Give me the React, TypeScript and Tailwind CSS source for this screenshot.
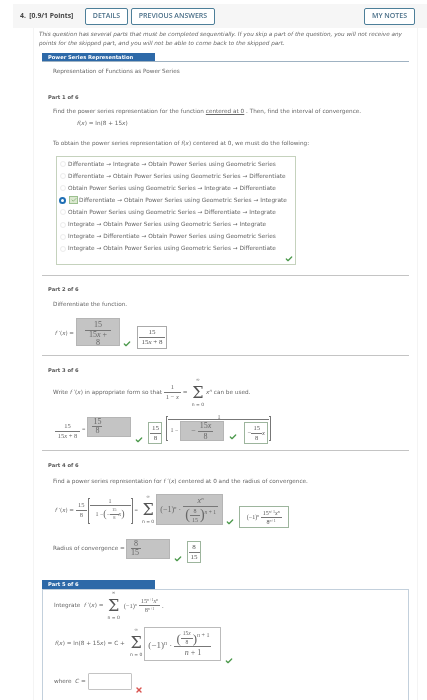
import React from 'react';
import { Check, X } from 'lucide-react';

const options = [
  'Differentiate → Integrate → Obtain Power Series using Geometric Series',
  'Differentiate → Obtain Power Series using Geometric Series → Differentiate',
  'Obtain Power Series using Geometric Series → Integrate → Differentiate',
  'Differentiate → Obtain Power Series using Geometric Series → Integrate',
  'Obtain Power Series using Geometric Series → Differentiate → Integrate',
  'Integrate → Obtain Power Series using Geometric Series → Integrate',
  'Integrate → Differentiate → Obtain Power Series using Geometric Series',
  'Integrate → Obtain Power Series using Geometric Series → Differentiate',
];

function Frac({ top, bottom, className = '' }: { top: React.ReactNode; bottom: React.ReactNode; className?: string }) {
  return (
    <span className={`inline-flex flex-col items-center leading-none ${className}`}>
      <span className="px-[2px] pb-[1px] whitespace-nowrap">{top}</span>
      <span className="self-stretch border-t border-[#777]" />
      <span className="px-[2px] pt-[1px] whitespace-nowrap">{bottom}</span>
    </span>
  );
}

function Sum() {
  return (
    <span className="inline-flex flex-col items-center leading-none text-[#555] mx-[2px]">
      <span className="text-[4.5px] h-[6px] leading-[6px]">∞</span>
      <span className="text-[16px] h-[19px] leading-[19px] font-['DejaVu_Serif',serif]">Σ</span>
      <span className="text-[4.5px] h-[6px] leading-[6px] font-['DejaVu_Sans',sans-serif]">n = 0</span>
    </span>
  );
}

function Tick({ className = '' }: { className?: string }) {
  return <Check className={`w-[8px] h-[8px] text-[#4d9a4d] shrink-0 ${className}`} strokeWidth={4} />;
}

function Answer({ children, className = '' }: { children: React.ReactNode; className?: string }) {
  return (
    <span className={`inline-flex items-center justify-center border border-[#9db59d] bg-white font-['Liberation_Serif',serif] text-[#555] ${className}`}>
      {children}
    </span>
  );
}

function Filled({ children, className = '' }: { children: React.ReactNode; className?: string }) {
  return (
    <span className={`flex bg-[#c4c4c4] border border-[#b5b5b5] font-['Liberation_Serif',serif] text-[#666] ${className}`}>
      {children}
    </span>
  );
}

function PartLabel({ children, className = '' }: { children: React.ReactNode; className?: string }) {
  return <div className={`pl-[6px] text-[5.2px] leading-[8px] font-bold text-[#555] ${className}`}>{children}</div>;
}

function Para({ children, className = '' }: { children: React.ReactNode; className?: string }) {
  return <div className={`pl-[11px] text-[5.72px] leading-[8px] text-[#666] whitespace-nowrap ${className}`}>{children}</div>;
}

function BracketEdge({ side }: { side: 'left' | 'right' }) {
  return <span className={`w-[2px] shrink-0 self-stretch border-y border-[#777] ${side === 'left' ? 'border-l' : 'border-r'}`} />;
}

export default function App() {
  return (
    <div className="w-[427px] h-[700px] overflow-hidden bg-white font-['DejaVu_Sans',sans-serif] blur-[0.35px]">
      {/* Question header */}
      <div className="pt-[4px]">
        <div className="ml-[13px] h-[24px] bg-[#f6f6f6] flex items-center pl-[7px] pr-[12px] font-['Open_Sans',sans-serif]">
          <span className="text-[6.8px] font-bold text-[#444] w-[65px] whitespace-nowrap">4.&nbsp; [0.9/1 Points]</span>
          <span className="h-[17px] w-[43px] flex items-center justify-center border border-[#4d7f99] rounded-[2px] bg-white text-[7px] font-semibold text-[#4a6f88]">DETAILS</span>
          <span className="ml-[3px] h-[17px] w-[84px] flex items-center justify-center border border-[#4d7f99] rounded-[2px] bg-white text-[7px] font-semibold text-[#4a6f88]">PREVIOUS ANSWERS</span>
          <span className="ml-auto h-[17px] w-[51px] flex items-center justify-center border border-[#4d7f99] rounded-[2px] bg-white text-[7px] font-semibold text-[#4a6f88]">MY NOTES</span>
        </div>
      </div>

      {/* Question body */}
      <div className="ml-[33px] mr-[9px] border-x border-[#f4f4f4] h-[672px]">
        <div className="pt-[2px] pl-[5px] text-[5.7px] leading-[9px] italic text-[#666] whitespace-nowrap">
          <div>This question has several parts that must be completed sequentially. If you skip a part of the question, you will not receive any</div>
          <div>points for the skipped part, and you will not be able to come back to the skipped part.</div>
        </div>

        <div className="ml-[8px] mr-[8px]">
          <div className="mt-[5px] border-b border-[#9fb2c2] h-[9px]">
            <div className="w-[113px] h-[8px] bg-[#2d69a8] pl-[6px] text-[5.2px] leading-[8px] font-bold text-white">Power Series Representation</div>
          </div>
          <Para className="mt-[5px]">Representation of Functions as Power Series</Para>

          <PartLabel className="mt-[18px]">Part 1 of 6</PartLabel>
          <Para className="mt-[6px]">
            Find the power series representation for the function <span className="underline">centered at 0</span> . Then, find the interval of convergence.
          </Para>
          <div className="pl-[35px] mt-[4px] text-[5.72px] leading-[8px] text-[#666]"><i>f</i>(<i>x</i>) = ln(8 + 15<i>x</i>)</div>
          <Para className="mt-[12px]">To obtain the power series representation of <i>f</i>(<i>x</i>) centered at 0, we must do the following:</Para>

          {/* Choice box */}
          <div className="ml-[14px] mt-[9px] w-[240px] h-[109px] border border-[#c5d2bd] pt-[1px] pl-[1px] relative">
            {options.map((o, i) => (
              <div key={o} className="h-[12.1px] flex items-center text-[5.8px] text-[#666] whitespace-nowrap">
                {i === 3 ? (
                  <>
                    <span className="w-[7px] h-[7px] rounded-full border-[2px] border-[#1f6fb5] bg-white mr-[3px] ml-[1px] shrink-0" />
                    <span className="w-[9px] h-[8px] mr-[1px] border border-[#9cc08f] bg-[#dbe8d0] flex items-center justify-center shrink-0">
                      <Check className="w-[6px] h-[6px] text-[#7fae6f]" strokeWidth={3} />
                    </span>
                  </>
                ) : (
                  <span className="w-[6px] h-[6px] rounded-full border border-[#ececec] bg-white mr-[2px] ml-[2px] shrink-0" />
                )}
                <span>{o}</span>
              </div>
            ))}
            <Tick className="absolute right-[2px] bottom-[1px]" />
          </div>

          <div className="mt-[10px] border-t border-[#c4c4c4]" />

          {/* Part 2 */}
          <PartLabel className="mt-[9px]">Part 2 of 6</PartLabel>
          <Para className="mt-[7px]">Differentiate the function.</Para>
          <div className="mt-[10px] h-[31px] pl-[13px] flex items-start text-[#666]">
            <span className="text-[5.55px] mt-[11px] w-[21px]"><i>f</i> ′(<i>x</i>) =</span>
            <Filled className="w-[44px] h-[28px] flex-col items-center text-[8px] leading-[8px]">
              <span className="mt-[2px] w-[26px] text-center border-b border-[#777] pb-[1px]">15</span>
              <span>15<i>x</i> +</span>
              <span>8</span>
            </Filled>
            <Tick className="ml-[3px] mt-[22px]" />
            <Answer className="ml-[6px] mt-[8px] w-[30px] h-[23px] text-[7px] border-[#aaa]">
              <Frac top="15" bottom={<>15<i>x</i> + 8</>} />
            </Answer>
          </div>
          <div className="mt-[6px] border-t border-[#c4c4c4]" />

          {/* Part 3 */}
          <PartLabel className="mt-[10px]">Part 3 of 6</PartLabel>
          <div className="mt-[7px] h-[22px] pl-[11px] flex items-center text-[5.72px] text-[#666] whitespace-nowrap">
            <span>Write <i>f</i> ′(<i>x</i>) in appropriate form so that&nbsp;</span>
            <Frac className="font-['Liberation_Serif',serif] text-[6.5px]" top="1" bottom={<>1 − <i>x</i></>} />
            <span className="mx-[2px]">=</span>
            <Sum />
            <i>x<sup className="text-[4px]">n</sup></i>
            <span>&nbsp;can be used.</span>
          </div>
          <div className="mt-[13px] h-[30px] pl-[13px] flex items-start text-[#666] font-['Liberation_Serif',serif]">
            <Frac className="text-[6.5px] mt-[7px] w-[25px]" top="15" bottom={<>15<i>x</i> + 8</>} />
            <span className="text-[6px] mx-[2px] mt-[9px]">=</span>
            <Filled className="w-[44px] h-[20px] mt-[1px] flex-col items-start pl-[4px] text-[8px] leading-[8px]">
              <span className="border-b border-[#777] px-[1px]">15</span>
              <span className="px-[3px]">8</span>
            </Filled>
            <Tick className="ml-[4px] mt-[20px]" />
            <Answer className="ml-[5px] mt-[6px] w-[14px] h-[22px] text-[7px]"><Frac top="15" bottom="8" /></Answer>
            <span className="ml-[4px] h-[25px] flex">
              <BracketEdge side="left" />
              <span className="w-[101px] flex flex-col items-center">
                <span className="text-[6px] h-[3px] leading-[3px]">1</span>
                <span className="self-stretch border-t border-[#777]" />
                <span className="flex items-start self-stretch pl-[2px] pt-[1px] text-[6px]">
                  <span className="mt-[5px] mr-[2px]">1 −</span>
                  <Filled className="w-[44px] h-[20px] items-center justify-center text-[8px]">
                    <span className="mr-[2px]">−</span>
                    <Frac top={<>15<i>x</i></>} bottom="8" />
                  </Filled>
                  <Tick className="ml-[5px] mt-[12px]" />
                  <Answer className="ml-[7px] mt-[1px] w-[24px] h-[22px] text-[6.5px]">
                    −<Frac top="15" bottom="8" /><i>x</i>
                  </Answer>
                </span>
              </span>
              <BracketEdge side="right" />
            </span>
          </div>
          <div className="mt-[4px] border-t border-[#c4c4c4]" />

          {/* Part 4 */}
          <PartLabel className="mt-[10px]">Part 4 of 6</PartLabel>
          <Para className="mt-[8px]">Find a power series representation for <i>f</i> ′(<i>x</i>) centered at 0 and the radius of convergence.</Para>
          <div className="mt-[9px] h-[32px] pl-[13px] flex items-start text-[#666] font-['Liberation_Serif',serif]">
            <span className="text-[5.55px] mt-[12px] w-[18px] whitespace-nowrap font-['DejaVu_Sans',sans-serif]"><i>f</i> ′(<i>x</i>) =</span>
            <Frac className="text-[6.5px] mt-[8px] ml-[3px]" top="15" bottom="8" />
            <span className="mt-[4px] ml-[1px] h-[26px] flex">
              <BracketEdge side="left" />
              <span className="w-[41px] flex flex-col items-center text-[6px] leading-[7px]">
                <span>1</span>
                <span className="self-stretch border-t border-[#777]" />
                <span className="whitespace-nowrap mt-[2px] flex items-center">1 − <span className="text-[10px] leading-[10px]">(</span>− <Frac className="text-[4.5px]" top="15" bottom="8" /><i>x</i><span className="text-[10px] leading-[10px]">)</span></span>
              </span>
              <BracketEdge side="right" />
            </span>
            <span className="text-[6px] mx-[2px] mt-[12px]">=</span>
            <Sum />
            <Filled className="w-[67px] h-[31px] items-center pl-[3px] text-[8px]">
              <span className="whitespace-nowrap">(−1)<i><sup className="text-[5px]">n</sup></i> ·&nbsp;</span>
              <Frac
                top={<i>x<sup className="text-[5px]">n</sup></i>}
                bottom={<span className="flex items-center"><span className="text-[14px] leading-[14px]">(</span><Frac className="text-[6px]" top="8" bottom="15" /><span className="text-[14px] leading-[14px]">)</span><sup className="text-[5.5px]"><i>n</i> + 1</sup></span>}
              />
            </Filled>
            <Tick className="ml-[3px] mt-[24px]" />
            <Answer className="ml-[5px] mt-[12px] w-[50px] h-[22px] text-[6px] border-[#9db59d]">
              (−1)<i><sup className="text-[4px]">n</sup></i>&nbsp;<Frac top={<>15<sup className="text-[4px]"><i>n</i>+1</sup><i>x<sup className="text-[4px]">n</sup></i></>} bottom={<>8<sup className="text-[4px]"><i>n</i>+1</sup></>} />
            </Answer>
          </div>
          <div className="mt-[13px] h-[24px] pl-[11px] flex items-start text-[#666] whitespace-nowrap">
            <span className="text-[5.72px] mt-[5px] w-[73px]">Radius of convergence =</span>
            <Filled className="w-[44px] h-[20px] flex-col items-start pl-[4px] text-[8px] leading-[8px] font-['Liberation_Serif',serif]">
              <span className="px-[3px] border-b border-[#777]">8</span>
              <span>15</span>
            </Filled>
            <Tick className="ml-[4px] mt-[16px]" />
            <Answer className="ml-[5px] mt-[2px] w-[14px] h-[22px] text-[7px]"><Frac top="8" bottom="15" /></Answer>
          </div>

          {/* Part 5 */}
          <div className="mt-[17px] w-[113px] h-[9px] bg-[#2d69a8] pl-[6px] text-[5.2px] leading-[9px] font-bold text-white">Part 5 of 6</div>
          <div className="border border-[#c3d0dc] h-[120px] pl-[11px] text-[#666]">
            <div className="mt-[4px] h-[23px] flex items-center text-[5.72px] whitespace-nowrap">
              <span>Integrate&nbsp; <i>f</i> ′(<i>x</i>) =&nbsp;</span>
              <Sum />
              <span className="font-['Liberation_Serif',serif] text-[6.5px] flex items-center ml-[2px]">
                (−1)<i><sup className="text-[4px]">n</sup></i>&nbsp;
                <Frac top={<>15<sup className="text-[4px]"><i>n</i>+1</sup><i>x<sup className="text-[4px]">n</sup></i></>} bottom={<>8<sup className="text-[4px]"><i>n</i>+1</sup></>} />
                &nbsp;.
              </span>
            </div>
            <div className="mt-[10px] h-[34px] flex items-start pl-[1px] whitespace-nowrap">
              <span className="text-[5.72px] mt-[12px] w-[73px]"><i>f</i>(<i>x</i>) = ln(8 + 15<i>x</i>) = C +</span>
              <Sum />
              <span className="w-[77px] h-[34px] border border-[#bbb] bg-white flex items-center pl-[3px] font-['Liberation_Serif',serif] text-[9px]">
                <span className="mt-[3px]">(−1)<i><sup className="text-[6px]">n</sup></i> ·&nbsp;</span>
                <Frac
                  top={<span className="flex items-center"><span className="text-[13px] leading-[13px]">(</span><Frac className="text-[5.5px]" top={<>15<i>x</i></>} bottom="8" /><span className="text-[13px] leading-[13px]">)</span><sup className="text-[6px]"><i>n</i> + 1</sup></span>}
                  bottom={<span className="text-[8px]"><i>n</i> + 1</span>}
                />
              </span>
              <Tick className="ml-[4px] mt-[30px]" />
            </div>
            <div className="mt-[12px] flex items-start whitespace-nowrap">
              <span className="text-[5.72px] mt-[4px] w-[34px]">where&nbsp; <i>C</i> =</span>
              <span className="w-[44px] h-[17px] border border-[#c4c4c4] rounded-[1px] bg-white" />
              <X className="w-[8px] h-[8px] text-[#d9534f] ml-[3px] mt-[13px]" strokeWidth={4} />
            </div>
          </div>
        </div>
      </div>
    </div>
  );
}
